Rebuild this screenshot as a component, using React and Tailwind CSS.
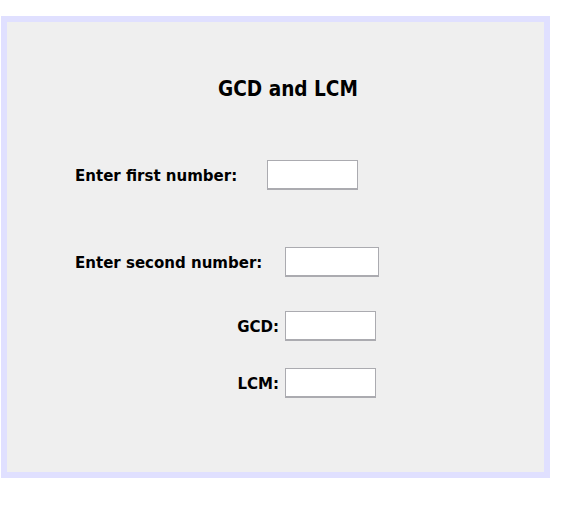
export default function App() {
  const font = { fontFamily: '"DejaVu Sans Condensed", "DejaVu Sans", Tahoma, sans-serif' };
  const box = "bg-white border border-[#ababb0] border-b-2 h-[30px] shrink-0";
  const label = "text-[16.7px] leading-[20px] font-bold text-black";
  return (
    <div className="w-[572px] h-[509px] bg-white pt-[16px] pl-[1px]" style={font}>
      <div className="w-[549px] h-[462px] border-[6px] border-[#e0e0ff] bg-[#efefef] flex flex-col">
        <div className="mt-[55px] pl-[211px] text-[20.6px] leading-[24px] font-bold text-black">GCD and LCM</div>
        <div className="mt-[59px] pl-[68px] flex items-center">
          <div className={"w-[192px] " + label}>Enter first number:</div>
          <div className={box + " w-[91px]"}></div>
        </div>
        <div className="mt-[57px] pl-[68px] flex items-center">
          <div className={"w-[210px] " + label}>Enter second number:</div>
          <div className={box + " w-[94px]"}></div>
        </div>
        <div className="mt-[34px] pl-[68px] flex items-center">
          <div className={"w-[210px] pr-[6px] text-right " + label}>GCD:</div>
          <div className={box + " w-[91px]"}></div>
        </div>
        <div className="mt-[27px] pl-[68px] flex items-center">
          <div className={"w-[210px] pr-[6px] text-right " + label}>LCM:</div>
          <div className={box + " w-[91px]"}></div>
        </div>
      </div>
    </div>
  );
}
